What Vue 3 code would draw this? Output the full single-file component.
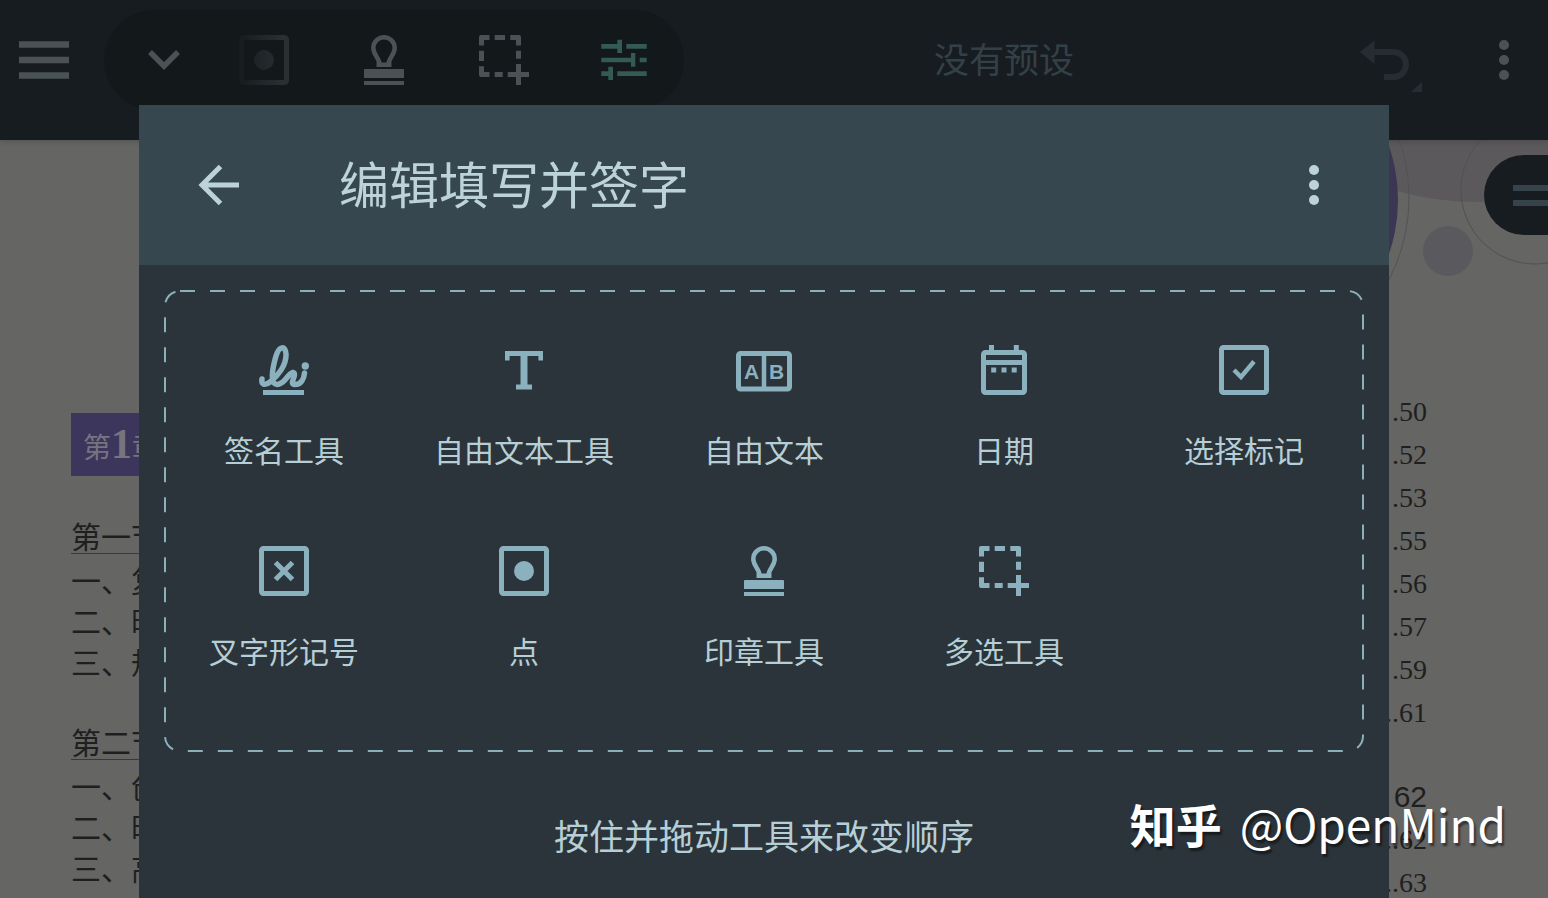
<template>
  <div class="app">
    <!-- Icon shapes -->
    <svg class="icon-defs" aria-hidden="true">
      <symbol id="icon-menu" viewBox="0 0 50 50">
        <path d="M0 9.5H50M0 25H50M0 40.5H50" stroke="currentColor" stroke-width="6.5" />
      </symbol>
      <symbol id="icon-chevron" viewBox="0 0 50 50">
        <path d="M11 17L25 31L39 17" fill="none" stroke="currentColor" stroke-width="5.5" />
      </symbol>
      <symbol id="icon-more" viewBox="0 0 50 50">
        <g fill="currentColor">
          <circle cx="25" cy="10" r="5" />
          <circle cx="25" cy="25" r="5" />
          <circle cx="25" cy="40" r="5" />
        </g>
      </symbol>
      <symbol id="icon-sliders" viewBox="0 0 50 50">
        <path
          fill="currentColor"
          d="M2.3 9H18.3V4.7H23V18H18.3V13.7H2.3ZM27.3 9H47.7V13.7H27.3ZM2.3 22.7H32V18H36.3V31.7H32V27.3H2.3ZM40.7 22.7H47.7V27.3H40.7ZM2.3 36.3H9.3V31.7H14V45H9.3V41H2.3ZM18.3 36.3H47.7V41H18.3Z"
        />
      </symbol>
      <symbol id="icon-undo" viewBox="0 0 64 64">
        <path d="M12 24H33.5A12.5 12.5 0 0 1 33.5 49H24" fill="none" stroke="currentColor" stroke-width="6" />
        <path d="M0 24L14.5 12.5V36ZM62 54V64H51Z" fill="currentColor" />
      </symbol>
      <symbol id="icon-back" viewBox="0 0 50 50">
        <path d="M45 25H9M26.5 6.5L8 25L26.5 43.5" fill="none" stroke="currentColor" stroke-width="5" />
      </symbol>
      <symbol id="icon-sign" viewBox="0 0 50 50">
        <path
          d="M3 34C2 39.5 6 41 11 37C19 31 27.5 20 27 9C26.5 0 20 1 17 11C13.5 23 10.5 39 18 39.5C26 39.5 28 29 34 27.5C39 29 29 39.5 36 39.5C42 39.5 45 34 45.5 28"
          fill="none"
          stroke="currentColor"
          stroke-width="5.5"
          stroke-linecap="round"
          stroke-linejoin="round"
        />
        <circle cx="46.3" cy="21" r="3.7" fill="currentColor" />
        <path d="M4 47.5H45" stroke="currentColor" stroke-width="5" />
      </symbol>
      <symbol id="icon-type" viewBox="0 0 50 50">
        <path d="M6 8.5H44M17 42H33" stroke="currentColor" stroke-width="5" />
        <path d="M8.3 8V15.5M41.7 8V15.5" stroke="currentColor" stroke-width="4.6" />
        <path d="M25 8V42" stroke="currentColor" stroke-width="7" />
      </symbol>
      <symbol id="icon-comb" viewBox="-5 0 60 50">
        <rect x="-0.5" y="8.5" width="51" height="35.5" rx="2" fill="none" stroke="currentColor" stroke-width="5" />
        <path d="M25 8V44" stroke="currentColor" stroke-width="4.5" />
        <g class="comb-letters" fill="currentColor" text-anchor="middle">
          <text x="12.5" y="34">A</text>
          <text x="37.5" y="34">B</text>
        </g>
      </symbol>
      <symbol id="icon-date" viewBox="0 0 50 50">
        <rect x="4.5" y="7.5" width="41" height="40" rx="2" fill="none" stroke="currentColor" stroke-width="5" />
        <path d="M12.5 0V8M37.3 0V8" stroke="currentColor" stroke-width="5" />
        <path d="M4 17.5H46" stroke="currentColor" stroke-width="5" />
        <path d="M12.2 25H17.2M22.5 25H27.5M32.7 25H37.7" stroke="currentColor" stroke-width="5" />
      </symbol>
      <symbol id="icon-check" viewBox="0 0 50 50">
        <rect x="2.5" y="2.5" width="45" height="45" rx="2" fill="none" stroke="currentColor" stroke-width="5" />
        <path d="M15 25L22 32L35 16.5" fill="none" stroke="currentColor" stroke-width="4.5" />
      </symbol>
      <symbol id="icon-cross" viewBox="0 0 50 50">
        <rect x="2.5" y="2.5" width="45" height="45" rx="2" fill="none" stroke="currentColor" stroke-width="5" />
        <path d="M16.5 16.5L33.5 33.5M33.5 16.5L16.5 33.5" stroke="currentColor" stroke-width="5" />
      </symbol>
      <symbol id="icon-dot" viewBox="0 0 50 50">
        <rect x="2.5" y="2.5" width="45" height="45" rx="2" fill="none" stroke="currentColor" stroke-width="5" />
        <circle cx="25" cy="25" r="10" fill="currentColor" />
      </symbol>
      <symbol id="icon-stamp" viewBox="0 0 50 50">
        <path
          d="M20.5 29C20.5 23 14.3 20 14.3 13A10.7 10.7 0 0 1 35.7 13C35.7 20 29.5 23 29.5 29"
          fill="none"
          stroke="currentColor"
          stroke-width="4.5"
        />
        <path d="M17.5 27.5H32.5V32H17.5ZM5 35Q5 34 6 34H44Q45 34 45 35V43H5ZM5 46H45V50H5Z" fill="currentColor" />
      </symbol>
      <symbol id="icon-select" viewBox="0 0 50 50">
        <path
          fill="currentColor"
          d="M0 2Q0 0 2 0H10.5V5H5V10.5H0ZM15.7 0H26V5H15.7ZM31.3 0H40Q42 0 42 2V10.5H37V5H31.3ZM0 15.7H5V26H0ZM37 15.7H42V23.7H37ZM0 31.3H5V37H10.5V42H2Q0 42 0 40ZM15.7 37H23.7V42H15.7ZM37 29H42V37H50V42H42V50H37V42H28.7V37H37Z"
        />
      </symbol>
    </svg>

    <!-- Toolbar -->
    <header class="toolbar">
      <button class="menu-btn" aria-label="菜单">
        <svg class="icon"><use href="#icon-menu" /></svg>
      </button>
      <div class="tool-strip">
        <button
          v-for="item in stripItems"
          :key="item.icon"
          class="strip-btn"
          :class="item.icon"
          :aria-label="item.label"
        >
          <svg class="icon"><use :href="'#icon-' + item.icon" /></svg>
        </button>
      </div>
      <div class="preset">没有预设</div>
      <button class="undo-btn" aria-label="撤销">
        <svg class="icon undo-icon"><use href="#icon-undo" /></svg>
      </button>
      <button class="more-btn" aria-label="更多">
        <svg class="icon"><use href="#icon-more" /></svg>
      </button>
    </header>

    <!-- Document page -->
    <main class="document">
      <svg class="ornament" viewBox="0 0 160 160" aria-hidden="true">
        <path d="M0 0H160V62H95Q40 62 0 48Z" fill="#5c595c" />
        <circle cx="-156" cy="60" r="166" fill="#3c3654" />
        <circle cx="-156" cy="58" r="177" fill="none" stroke="#555254" />
        <circle cx="147" cy="50" r="74" fill="none" stroke="#525052" />
        <circle cx="60" cy="111" r="25" fill="#5a595d" />
      </svg>
      <div class="contents">
        <h2 class="chapter">第<b>1</b>章</h2>
        <section v-for="section in sections" :key="section.title" class="section">
          <h3>{{ section.title }}</h3>
          <p v-for="line in section.lines" :key="line">{{ line }}</p>
        </section>
      </div>
      <div class="page-numbers">
        <span
          v-for="(page, index) in pages"
          :key="index"
          :class="{ heading: page.heading }"
        >{{ page.text }}</span>
      </div>
      <button class="side-handle" aria-label="侧栏"></button>
    </main>

    <!-- Edit dialog -->
    <div class="overlay">
      <div class="dialog" role="dialog" aria-labelledby="dialog-title">
        <div class="dialog-header">
          <button class="back-btn" aria-label="返回">
            <svg class="icon"><use href="#icon-back" /></svg>
          </button>
          <h1 id="dialog-title">编辑填写并签字</h1>
          <button class="dialog-more" aria-label="更多选项">
            <svg class="icon"><use href="#icon-more" /></svg>
          </button>
        </div>
        <div class="tool-area">
          <svg class="dashes" aria-hidden="true">
            <rect x="1" y="1" rx="15" ry="15" />
          </svg>
          <button v-for="tool in tools" :key="tool.label" class="tool">
            <svg class="icon" :class="tool.icon"><use :href="'#icon-' + tool.icon" /></svg>
            <span>{{ tool.label }}</span>
          </button>
        </div>
        <p class="hint">按住并拖动工具来改变顺序</p>
      </div>
    </div>

    <div class="watermark"><b>知乎</b><span>@OpenMind</span></div>
  </div>
</template>

<script setup>
import { ref } from 'vue'

const stripItems = [
  { icon: 'chevron', label: '展开' },
  { icon: 'dot', label: '点' },
  { icon: 'stamp', label: '印章工具' },
  { icon: 'select', label: '多选工具' },
  { icon: 'sliders', label: '设置' }
]

const tools = ref([
  { icon: 'sign', label: '签名工具' },
  { icon: 'type', label: '自由文本工具' },
  { icon: 'comb', label: '自由文本' },
  { icon: 'date', label: '日期' },
  { icon: 'check', label: '选择标记' },
  { icon: 'cross', label: '叉字形记号' },
  { icon: 'dot', label: '点' },
  { icon: 'stamp', label: '印章工具' },
  { icon: 'select', label: '多选工具' }
])

const sections = [
  { title: '第一节', lines: ['一、复', '二、时', '三、规'] },
  { title: '第二节', lines: ['一、创', '二、时', '三、高'] }
]

const pages = [
  { text: '.50' },
  { text: '.52' },
  { text: '.53' },
  { text: '.55' },
  { text: '.56' },
  { text: '.57' },
  { text: '.59' },
  { text: '..61' },
  { text: '62', heading: true },
  { text: '..62' },
  { text: '..63' }
]
</script>

<style>
body {
  margin: 0;
  background: #656564;
}
</style>

<style scoped>
.app {
  position: relative;
  display: flex;
  flex-direction: column;
  height: 100vh;
  overflow: hidden;
  background: #656564;
  font-family: "Noto Sans CJK SC", "Liberation Sans", sans-serif;
}

.icon-defs {
  position: absolute;
  width: 0;
  height: 0;
}

.icon {
  display: block;
  width: 50px;
  height: 50px;
  flex: none;
}

button {
  display: flex;
  align-items: center;
  justify-content: center;
  margin: 0;
  padding: 0;
  border: none;
  background: none;
  color: inherit;
  font: inherit;
  cursor: pointer;
}

/* Toolbar */
.toolbar {
  position: relative;
  z-index: 1;
  display: flex;
  align-items: flex-start;
  height: 140px;
  flex: none;
  background: #171c20;
  color: #4b5255;
  box-shadow: 0 1px 6px rgba(0, 0, 0, 0.2);
}

.toolbar > button,
.preset {
  height: 120px;
}

.menu-btn {
  width: 88px;
}

.tool-strip {
  display: flex;
  box-sizing: border-box;
  height: 100px;
  margin: 10px 0 0 16px;
  padding-left: 20px;
  border-radius: 50px;
  background: #13181b;
}

.strip-btn {
  width: 120px;
}

.strip-btn.chevron {
  width: 80px;
}

.strip-btn.dot {
  color: #2a2f32;
  -webkit-mask-image: linear-gradient(to right, rgba(0, 0, 0, 0.2) 30%, #000 65%);
  mask-image: linear-gradient(to right, rgba(0, 0, 0, 0.2) 30%, #000 65%);
}

.strip-btn.sliders {
  color: #335a54;
}

.preset {
  flex: 1;
  color: #344047;
  font-size: 35px;
  line-height: 116px;
  text-align: center;
}

.undo-btn {
  width: 136px;
  color: #252d32;
}

.undo-icon {
  width: 64px;
  height: 64px;
}

.more-btn {
  width: 88px;
}

/* Document */
.document {
  position: relative;
  display: flex;
  justify-content: space-between;
  flex: 1;
  min-height: 0;
  color: #1f1f1f;
}

.ornament {
  position: absolute;
  top: 0;
  right: 0;
  width: 160px;
  height: 160px;
}

.contents {
  margin: 273px 0 0 71px;
  white-space: nowrap;
}

.chapter {
  width: 100px;
  height: 63px;
  margin: 0 0 40px;
  padding-left: 12px;
  background: #3c355c;
  color: #77747f;
  font-size: 28px;
  font-weight: 400;
  line-height: 63px;
}

.chapter b {
  font-family: "Liberation Serif", serif;
  font-size: 42px;
}

.section {
  margin-bottom: 40px;
  font-size: 30px;
}

.section h3 {
  height: 37px;
  margin: 0 0 5px;
  border-bottom: 1px solid #393939;
  font-size: 30px;
  font-weight: 400;
  line-height: 38px;
}

.section p {
  margin: 0;
  line-height: 41px;
}

.page-numbers {
  display: flex;
  flex-direction: column;
  margin: 250px 121px 0 0;
  font-family: "Liberation Serif", serif;
  font-size: 28px;
  line-height: 43px;
  text-align: right;
}

.page-numbers .heading {
  margin-top: 41px;
  font-family: "Liberation Sans", sans-serif;
  font-size: 30px;
}

.side-handle {
  position: absolute;
  top: 15px;
  right: 0;
  width: 64px;
  height: 80px;
  border-radius: 40px 0 0 40px;
  background: #171c20;
}

.side-handle::before {
  content: "";
  width: 35px;
  height: 9px;
  margin-left: auto;
  border: solid #36434b;
  border-width: 6px 0;
}

/* Dialog */
.overlay {
  position: absolute;
  z-index: 2;
  inset: 0;
  display: flex;
  padding: 105px 159px 0 139px;
}

.dialog {
  flex: 1;
  background: #2b343a;
  color: #b6cfd6;
}

.dialog-header {
  display: flex;
  height: 160px;
  background: #37474f;
  color: #bcd3da;
}

.back-btn {
  width: 160px;
}

.dialog-header h1 {
  flex: 1;
  margin: 0 0 0 40px;
  font-size: 50px;
  font-weight: 400;
  line-height: 154px;
}

.dialog-more {
  width: 150px;
}

.tool-area {
  position: relative;
  display: grid;
  grid-template-columns: repeat(5, 1fr);
  grid-auto-rows: 201px;
  margin: 25px 25px 0;
  padding-bottom: 60px;
}

.dashes {
  position: absolute;
  inset: 0;
  width: 100%;
  height: 100%;
  pointer-events: none;
}

.dashes rect {
  width: calc(100% - 2px);
  height: calc(100% - 2px);
  fill: none;
  stroke: #8bb0bb;
  stroke-width: 2;
  stroke-dasharray: 15 15;
}

.tool {
  flex-direction: column;
  justify-content: flex-start;
  gap: 34px;
  padding-top: 55px;
  font-size: 30px;
  line-height: 40px;
}

.tool .icon {
  color: #8bb0be;
}

.tool .comb {
  width: 60px;
}

.comb-letters {
  font-family: "Liberation Sans", sans-serif;
  font-size: 21px;
  font-weight: 700;
}

.hint {
  margin: 58px 0 0;
  font-size: 35px;
  line-height: 50px;
  text-align: center;
}

.watermark {
  position: absolute;
  z-index: 3;
  right: 42px;
  bottom: 45px;
  display: flex;
  gap: 18px;
  color: #fff;
  font-size: 46px;
  line-height: 60px;
  text-shadow: 2px 3px 2px rgba(0, 0, 0, 0.5);
}
</style>
